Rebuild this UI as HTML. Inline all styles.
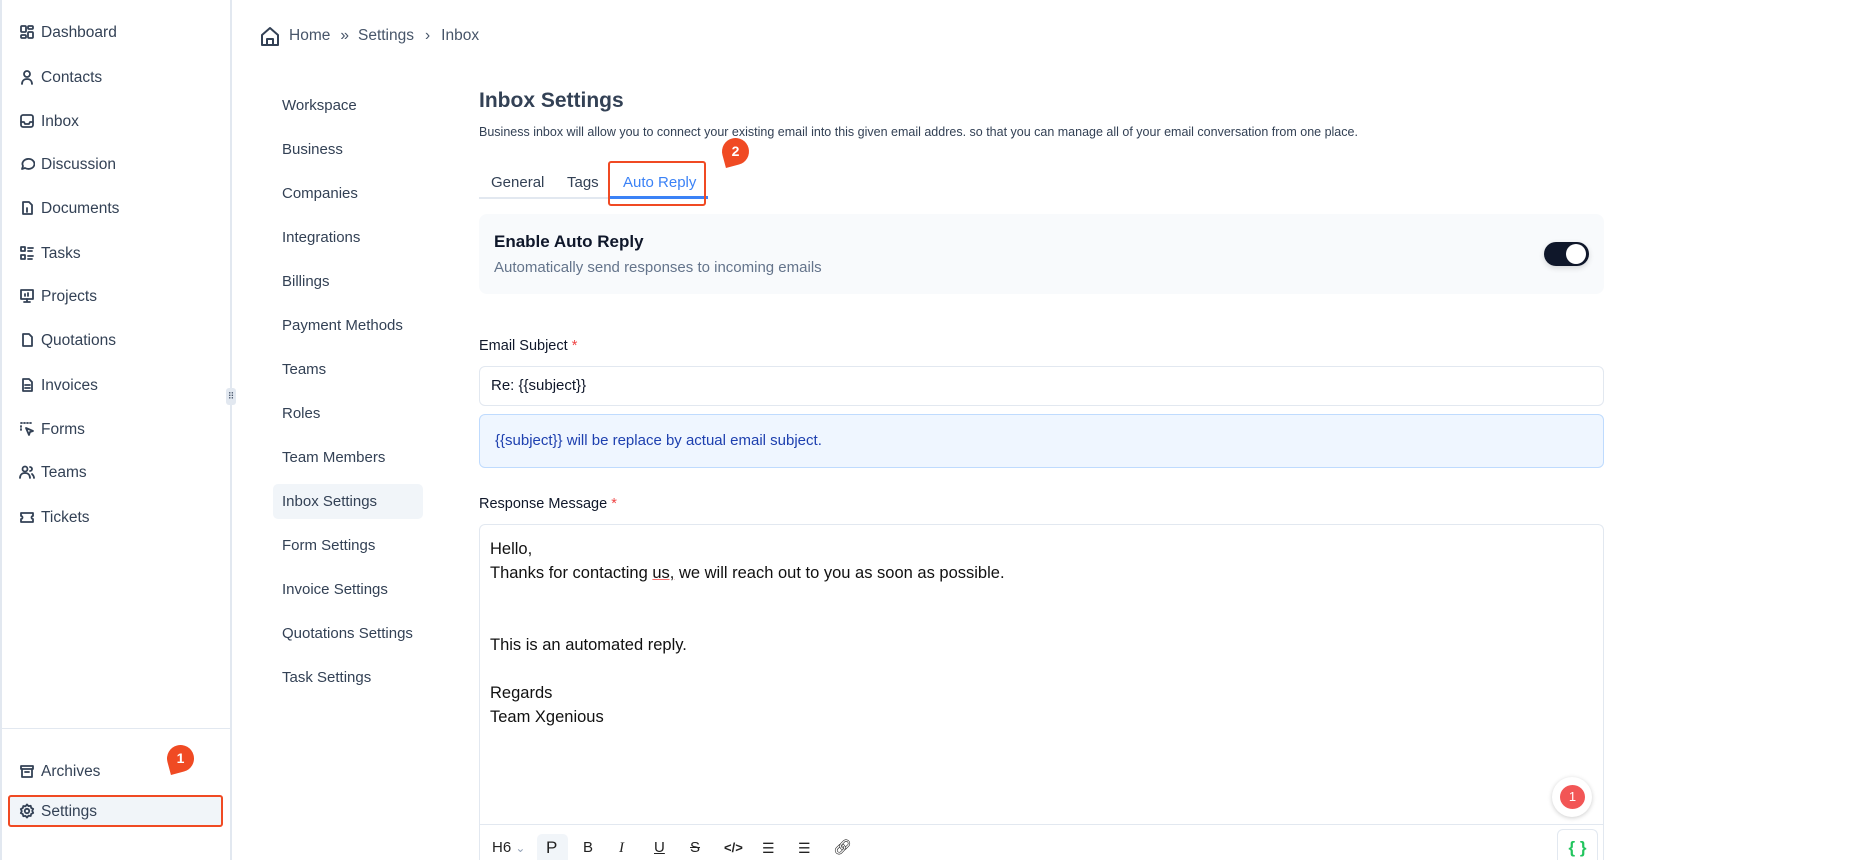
<!DOCTYPE html>
<html style="width:1849px;height:860px;overflow:hidden"><head><meta charset="utf-8">
<style>
*{box-sizing:border-box;margin:0;padding:0}
body{width:1849px;height:860px;overflow:hidden;background:#fff;font-family:"Liberation Sans",sans-serif;color:#334155;position:relative}
.abs{position:absolute}
.side{left:0;top:0;width:232px;height:860px;border-left:2px solid #e2e8f0;border-right:2px solid #e2e8f0}
.si{position:absolute;left:19px;font-size:15.5px;color:#334155;display:flex;align-items:center;height:20px;margin-top:-10px}
.si svg{width:16px;height:16px;margin-right:6px;stroke:#334155;fill:none;stroke-width:1.8;stroke-linecap:round;stroke-linejoin:round;position:relative;top:-1px}
.sm{position:absolute;left:282px;font-size:15px;color:#334155;height:20px;line-height:20px;margin-top:-10px}
.badge{position:absolute;width:27px;height:27px;background:#f04a23;border-radius:50% 50% 50% 0;transform:rotate(-15deg);color:#fff;font-size:14px;font-weight:bold;text-align:center;line-height:27px}
.badge span{display:block;transform:rotate(15deg)}
.tb{position:absolute;top:838px;font-size:15px;color:#222;height:20px;line-height:20px}
</style></head><body>
<div class="abs side"></div>
<div class="abs" style="left:0;top:728px;width:232px;height:1px;background:#e2e8f0"></div>
<div class="abs" style="left:226px;top:388px;width:10px;height:17px;background:#e2e8f0;border-radius:3px;font-size:9px;line-height:17px;text-align:center;color:#475569">⠿</div>

<div class="si" style="top:33px"><svg viewBox="0 0 16 16"><rect x="2" y="2" width="5" height="6" rx="1"/><rect x="9" y="2" width="5" height="3" rx="1"/><rect x="2" y="11" width="5" height="3" rx="1"/><rect x="9" y="8" width="5" height="6" rx="1"/></svg>Dashboard</div>
<div class="si" style="top:78px"><svg viewBox="0 0 16 16"><circle cx="8" cy="5" r="3"/><path d="M3 15c0-3 2-5 5-5s5 2 5 5"/></svg>Contacts</div>
<div class="si" style="top:122px"><svg viewBox="0 0 16 16"><rect x="2" y="2" width="12" height="12" rx="2"/><path d="M2 9h3l1 2h4l1-2h3"/></svg>Inbox</div>
<div class="si" style="top:165px"><svg viewBox="0 0 16 16"><path d="M3 13l1-3a6 5 0 1 1 2 2z"/></svg>Discussion</div>
<div class="si" style="top:209px"><svg viewBox="0 0 16 16"><path d="M4 2h6l3 3v9H4z"/><path d="M8 8v4"/></svg>Documents</div>
<div class="si" style="top:254px"><svg viewBox="0 0 16 16"><rect x="2" y="2" width="4" height="4"/><rect x="2" y="10" width="4" height="4"/><path d="M9 3h5M9 6h4M9 11h5M9 14h4"/></svg>Tasks</div>
<div class="si" style="top:297px"><svg viewBox="0 0 16 16"><rect x="2" y="2" width="12" height="9"/><path d="M8 11v3M5 14h6M6 8V6M9 8V5"/></svg>Projects</div>
<div class="si" style="top:341px"><svg viewBox="0 0 16 16"><path d="M4 2h6l3 3v9H4z"/></svg>Quotations</div>
<div class="si" style="top:386px"><svg viewBox="0 0 16 16"><path d="M4 2h6l3 3v9H4z"/><path d="M6 8h5M6 11h5"/></svg>Invoices</div>
<div class="si" style="top:430px"><svg viewBox="0 0 16 16"><path d="M2 2h10M2 5v6" stroke-dasharray="1 2"/><path d="M7 7l7 3-3 1-1 3z"/></svg>Forms</div>
<div class="si" style="top:473px"><svg viewBox="0 0 16 16"><circle cx="6" cy="5" r="2.5"/><path d="M1 14c0-3 2-5 5-5s5 2 5 5M11 3a2 2 0 0 1 0 4M13 10c1 1 2 2 2 4"/></svg>Teams</div>
<div class="si" style="top:518px"><svg viewBox="0 0 16 16"><path d="M2 4h12v3a1.5 1.5 0 0 0 0 3v3H2v-3a1.5 1.5 0 0 0 0-3z"/></svg>Tickets</div>
<div class="si" style="top:772px"><svg viewBox="0 0 16 16"><rect x="2" y="3" width="12" height="3"/><path d="M3 6v8h10V6M6 9h4"/></svg>Archives</div>
<div class="abs" style="left:8px;top:795px;width:215px;height:32px;background:#f1f5f9;border:2px solid #f04a23;border-radius:3px"></div>
<div class="si" style="top:812px"><svg viewBox="0 0 16 16"><circle cx="8" cy="8" r="2.2"/><path d="M8 1.5l1.5 1.6 2.2-.3.5 2.1 2 1-1 2 1 2-2 1-.5 2.1-2.2-.3L8 14.5l-1.5-1.6-2.2.3-.5-2.1-2-1 1-2-1-2 2-1 .5-2.1 2.2.3z"/></svg>Settings</div>
<div class="badge" style="left:167px;top:745px"><span>1</span></div>

<svg class="abs" style="left:259px;top:25px" width="22" height="22" viewBox="0 0 22 22" fill="none" stroke="#334155" stroke-width="2" stroke-linejoin="round"><path d="M3 10L11 3l8 7v10H3z"/><path d="M8 20v-6h6v6"/></svg>
<div class="abs" style="left:289px;top:26px;font-size:15.5px;color:#475569;line-height:20px">Home<span style="margin:0 9px 0 10px">»</span>Settings<span style="margin:0 11px">›</span>Inbox</div>

<div class="sm" style="top:106px">Workspace</div>
<div class="sm" style="top:150px">Business</div>
<div class="sm" style="top:194px">Companies</div>
<div class="sm" style="top:238px">Integrations</div>
<div class="sm" style="top:282px">Billings</div>
<div class="sm" style="top:326px">Payment Methods</div>
<div class="sm" style="top:370px">Teams</div>
<div class="sm" style="top:414px">Roles</div>
<div class="sm" style="top:458px">Team Members</div>
<div class="abs" style="left:273px;top:484px;width:150px;height:35px;background:#f1f5f9;border-radius:5px"></div>
<div class="sm" style="top:502px">Inbox Settings</div>
<div class="sm" style="top:546px">Form Settings</div>
<div class="sm" style="top:590px">Invoice Settings</div>
<div class="sm" style="top:634px">Quotations Settings</div>
<div class="sm" style="top:678px">Task Settings</div>

<div class="abs" style="left:479px;top:89px;font-size:21px;font-weight:bold;color:#334155">Inbox Settings</div>
<div class="abs" style="left:479px;top:125px;font-size:12.5px;color:#334155">Business inbox will allow you to connect your existing email into this given email addres. so that you can manage all of your email conversation from one place.</div>
<div class="abs" style="left:479px;top:197px;width:229px;height:2px;background:#e2e8f0"></div>
<div class="abs" style="left:491px;top:174px;font-size:15px;color:#334155">General</div>
<div class="abs" style="left:567px;top:174px;font-size:15px;color:#334155">Tags</div>
<div class="abs" style="left:623px;top:174px;font-size:15px;color:#3b82f6">Auto Reply</div>
<div class="abs" style="left:608px;top:196px;width:100px;height:3px;background:#3b82f6"></div>
<div class="abs" style="left:608px;top:161px;width:98px;height:45px;border:2px solid #f04a23;border-radius:3px"></div>
<div class="badge" style="left:722px;top:138px"><span>2</span></div>

<div class="abs" style="left:479px;top:214px;width:1125px;height:80px;background:#f8fafc;border-radius:8px"></div>
<div class="abs" style="left:494px;top:232px;font-size:17px;font-weight:bold;color:#0f172a">Enable Auto Reply</div>
<div class="abs" style="left:494px;top:259px;font-size:15px;color:#64748b">Automatically send responses to incoming emails</div>
<div class="abs" style="left:1544px;top:242px;width:45px;height:24px;background:#0f172a;border-radius:12px;box-shadow:0 2px 6px rgba(0,0,0,.15)"></div>
<div class="abs" style="left:1566px;top:244px;width:20px;height:20px;background:#fff;border-radius:50%"></div>

<div class="abs" style="left:479px;top:338px;font-size:14.5px;color:#0f172a">Email Subject <span style="color:#ef4444">*</span></div>
<div class="abs" style="left:479px;top:366px;width:1125px;height:40px;border:1px solid #e2e8f0;border-radius:6px"></div>
<div class="abs" style="left:491px;top:377px;font-size:15px;color:#0f172a">Re: {{subject}}</div>
<div class="abs" style="left:479px;top:414px;width:1125px;height:54px;background:#eff6ff;border:1px solid #bfdbfe;border-radius:6px"></div>
<div class="abs" style="left:495px;top:432px;font-size:15px;color:#1e40af">{{subject}} will be replace by actual email subject.</div>

<div class="abs" style="left:479px;top:496px;font-size:14.5px;color:#0f172a">Response Message <span style="color:#ef4444">*</span></div>
<div class="abs" style="left:479px;top:524px;width:1125px;height:336px;border:1px solid #e2e8f0;border-bottom:none;border-radius:6px 6px 0 0"></div>
<div class="abs" style="left:490px;top:537px;font-size:16.5px;line-height:24px;color:#111">Hello,<br>Thanks for contacting <span style="text-decoration:underline;text-decoration-color:#f87171">us,</span> we will reach out to you as soon as possible.<br><br><br>This is an automated reply.<br><br>Regards<br>Team Xgenious</div>
<div class="abs" style="left:480px;top:824px;width:1123px;height:1px;background:#e2e8f0"></div>
<div class="abs" style="left:1552px;top:777px;width:40px;height:40px;background:#fff;border-radius:50%;box-shadow:0 1px 5px rgba(0,0,0,.2)"></div>
<div class="abs" style="left:1560px;top:785px;width:25px;height:24px;background:#f25656;border-radius:50%;color:#fff;font-size:13px;text-align:center;line-height:24px">1</div>
<div class="abs" style="left:1557px;top:829px;width:41px;height:31px;border:1px solid #e2e8f0;border-bottom:none;border-radius:6px 6px 0 0;color:#22c55e;font-size:17px;font-weight:bold;text-align:center;line-height:36px">{ }</div>

<div class="abs" style="left:537px;top:834px;width:31px;height:26px;background:#f1f5f9;border-radius:5px 5px 0 0"></div>
<div class="tb" style="left:492px">H6 <span style="color:#94a3b8;font-size:12px">&#8964;</span></div>
<div class="tb" style="left:546px;font-size:17px">P</div>
<div class="tb" style="left:583px">B</div>
<div class="tb" style="left:619px;font-style:italic;font-family:'Liberation Serif',serif">I</div>
<div class="tb" style="left:654px;text-decoration:underline">U</div>
<div class="tb" style="left:690px;text-decoration:line-through">S</div>
<div class="tb" style="left:724px;font-size:13px;font-weight:bold">&lt;/&gt;</div>
<div class="tb" style="left:762px;font-size:14px">☰</div>
<div class="tb" style="left:798px;font-size:14px">☰</div>
<div class="tb" style="left:833px;font-size:15px">🔗︎</div>
</body></html>
